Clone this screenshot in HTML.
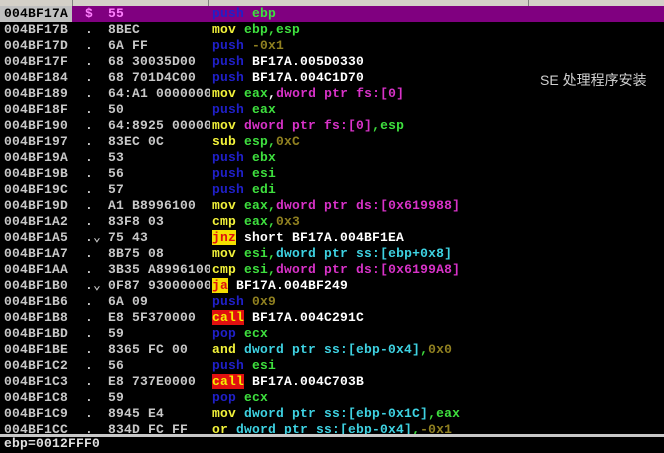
<!DOCTYPE html>
<html><head><meta charset="utf-8"><style>
body{margin:0;width:664px;height:453px;background:#000;overflow:hidden;position:relative;font-family:"Liberation Mono",monospace;font-weight:bold;font-size:13px;letter-spacing:0.2px;}
.hdr{position:absolute;left:0;top:0;width:664px;height:6px;background:#d4d0c8;}
.hdr i{position:absolute;top:0;width:1px;height:6px;background:#808080;}
.r{position:absolute;left:0;width:664px;height:16px;line-height:16px;white-space:pre;color:#c8c8c8;}
.r span{position:absolute;top:0;}
.a{left:4px;}
.d{left:85px;}
.b{left:108px;width:102px;overflow:hidden;}
.c{left:212px;}
.sel{background:#800080;}
.sel .a{left:0;padding-left:4px;width:68px;background:#c0c0c0;color:#000;}
.p{color:#2020c8}.g{color:#3ee03e}.y{color:#f2f23a}.m{color:#d832c8}.o{color:#908020}.w{color:#fff}.cy{color:#3ed2e2}
.jy{background:#f4e000;color:#e01010}.cr{background:#e01010;color:#f4f000}
.se{position:absolute;left:540px;top:70px;color:#d0d0d0;font-weight:normal;letter-spacing:0;font-family:"Liberation Sans","WenQuanYi Zen Hei",sans-serif;font-size:14px;}
.sep{position:absolute;left:0;top:434px;width:664px;height:3px;background:#c8c8c8;}
.st{position:absolute;left:4px;top:437px;height:16px;line-height:14px;color:#e0e0e0;width:660px;background:#000;}
</style></head><body>
<div class="hdr"><i style="left:72px"></i><i style="left:208px"></i><i style="left:528px"></i></div>
<div class="r sel" style="top:6px"><span class="a">004BF17A</span><span class="d" style="color:#ff80ff">$</span><span class="b" style="color:#ff80ff">55</span><span class="c"><b class="p">push</b> <b class="g">ebp</b></span></div>
<div class="r" style="top:22px"><span class="a">004BF17B</span><span class="d">.</span><span class="b">8BEC</span><span class="c"><b class="y">mov</b> <b class="g">ebp,esp</b></span></div>
<div class="r" style="top:38px"><span class="a">004BF17D</span><span class="d">.</span><span class="b">6A FF</span><span class="c"><b class="p">push</b> <b class="o">-0x1</b></span></div>
<div class="r" style="top:54px"><span class="a">004BF17F</span><span class="d">.</span><span class="b">68 30035D00</span><span class="c"><b class="p">push</b> <b class="w">BF17A.005D0330</b></span></div>
<div class="r" style="top:70px"><span class="a">004BF184</span><span class="d">.</span><span class="b">68 701D4C00</span><span class="c"><b class="p">push</b> <b class="w">BF17A.004C1D70</b></span></div>
<div class="r" style="top:86px"><span class="a">004BF189</span><span class="d">.</span><span class="b">64:A1 00000000</span><span class="c"><b class="y">mov</b> <b class="g">eax</b><b class="w">,</b><b class="m">dword ptr fs:[0]</b></span></div>
<div class="r" style="top:102px"><span class="a">004BF18F</span><span class="d">.</span><span class="b">50</span><span class="c"><b class="p">push</b> <b class="g">eax</b></span></div>
<div class="r" style="top:118px"><span class="a">004BF190</span><span class="d">.</span><span class="b">64:8925 00000000</span><span class="c"><b class="y">mov</b> <b class="m">dword ptr fs:[0]</b><b class="g">,esp</b></span></div>
<div class="r" style="top:134px"><span class="a">004BF197</span><span class="d">.</span><span class="b">83EC 0C</span><span class="c"><b class="y">sub</b> <b class="g">esp,</b><b class="o">0xC</b></span></div>
<div class="r" style="top:150px"><span class="a">004BF19A</span><span class="d">.</span><span class="b">53</span><span class="c"><b class="p">push</b> <b class="g">ebx</b></span></div>
<div class="r" style="top:166px"><span class="a">004BF19B</span><span class="d">.</span><span class="b">56</span><span class="c"><b class="p">push</b> <b class="g">esi</b></span></div>
<div class="r" style="top:182px"><span class="a">004BF19C</span><span class="d">.</span><span class="b">57</span><span class="c"><b class="p">push</b> <b class="g">edi</b></span></div>
<div class="r" style="top:198px"><span class="a">004BF19D</span><span class="d">.</span><span class="b">A1 B8996100</span><span class="c"><b class="y">mov</b> <b class="g">eax,</b><b class="m">dword ptr ds:[0x619988]</b></span></div>
<div class="r" style="top:214px"><span class="a">004BF1A2</span><span class="d">.</span><span class="b">83F8 03</span><span class="c"><b class="y">cmp</b> <b class="g">eax,</b><b class="o">0x3</b></span></div>
<div class="r" style="top:230px"><span class="a">004BF1A5</span><span class="d">.⌄</span><span class="b">75 43</span><span class="c"><b class="jy">jnz</b> <b class="w">short BF17A.004BF1EA</b></span></div>
<div class="r" style="top:246px"><span class="a">004BF1A7</span><span class="d">.</span><span class="b">8B75 08</span><span class="c"><b class="y">mov</b> <b class="g">esi,</b><b class="cy">dword ptr ss:[ebp+0x8]</b></span></div>
<div class="r" style="top:262px"><span class="a">004BF1AA</span><span class="d">.</span><span class="b">3B35 A8996100</span><span class="c"><b class="y">cmp</b> <b class="g">esi,</b><b class="m">dword ptr ds:[0x6199A8]</b></span></div>
<div class="r" style="top:278px"><span class="a">004BF1B0</span><span class="d">.⌄</span><span class="b">0F87 93000000</span><span class="c"><b class="jy">ja</b> <b class="w">BF17A.004BF249</b></span></div>
<div class="r" style="top:294px"><span class="a">004BF1B6</span><span class="d">.</span><span class="b">6A 09</span><span class="c"><b class="p">push</b> <b class="o">0x9</b></span></div>
<div class="r" style="top:310px"><span class="a">004BF1B8</span><span class="d">.</span><span class="b">E8 5F370000</span><span class="c"><b class="cr">call</b> <b class="w">BF17A.004C291C</b></span></div>
<div class="r" style="top:326px"><span class="a">004BF1BD</span><span class="d">.</span><span class="b">59</span><span class="c"><b class="p">pop</b> <b class="g">ecx</b></span></div>
<div class="r" style="top:342px"><span class="a">004BF1BE</span><span class="d">.</span><span class="b">8365 FC 00</span><span class="c"><b class="y">and</b> <b class="cy">dword ptr ss:[ebp-0x4]</b><b class="g">,</b><b class="o">0x0</b></span></div>
<div class="r" style="top:358px"><span class="a">004BF1C2</span><span class="d">.</span><span class="b">56</span><span class="c"><b class="p">push</b> <b class="g">esi</b></span></div>
<div class="r" style="top:374px"><span class="a">004BF1C3</span><span class="d">.</span><span class="b">E8 737E0000</span><span class="c"><b class="cr">call</b> <b class="w">BF17A.004C703B</b></span></div>
<div class="r" style="top:390px"><span class="a">004BF1C8</span><span class="d">.</span><span class="b">59</span><span class="c"><b class="p">pop</b> <b class="g">ecx</b></span></div>
<div class="r" style="top:406px"><span class="a">004BF1C9</span><span class="d">.</span><span class="b">8945 E4</span><span class="c"><b class="y">mov</b> <b class="cy">dword ptr ss:[ebp-0x1C]</b><b class="g">,eax</b></span></div>
<div class="r" style="top:422px"><span class="a">004BF1CC</span><span class="d">.</span><span class="b">834D FC FF</span><span class="c"><b class="y">or</b> <b class="cy">dword ptr ss:[ebp-0x4]</b><b class="g">,</b><b class="o">-0x1</b></span></div>
<div class="se">SE 处理程序安装</div>
<div class="sep"></div>
<div class="st">ebp=0012FFF0</div>
</body></html>
